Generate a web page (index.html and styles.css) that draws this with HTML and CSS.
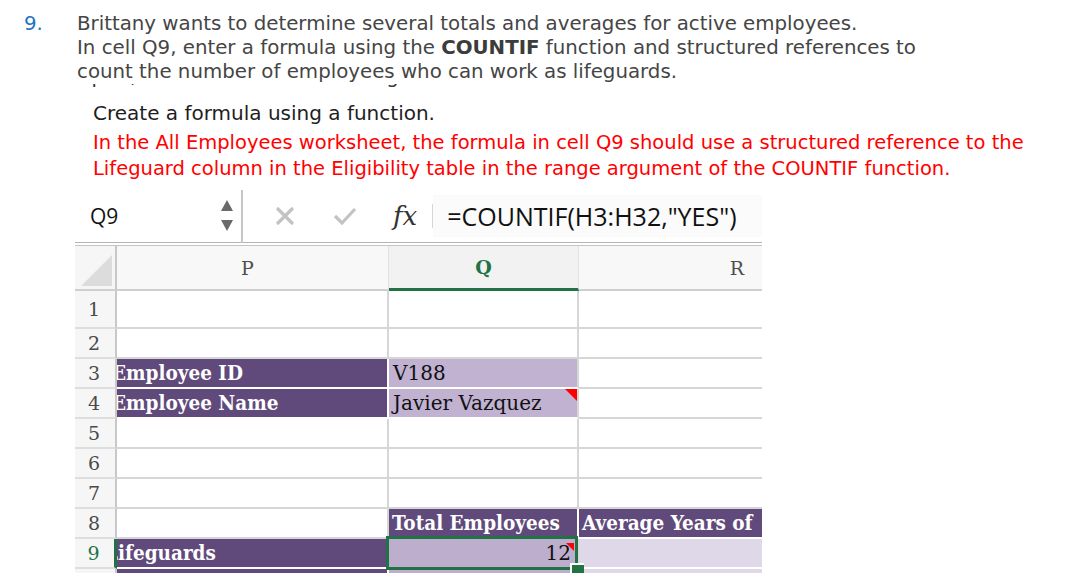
FILE: index.html
```html
<!DOCTYPE html>
<html>
<head>
<meta charset="utf-8">
<link rel="stylesheet" href="styles.css">
</head>
<body>
<div class="task">
  <div class="num">9.</div>
  <div class="task-text">
    <p class="lines">Brittany wants to determine several totals and averages for active employees.<br>In cell Q9, enter a formula using the <b>COUNTIF</b> function and structured references to<br>count the number of employees who can work as lifeguards.</p>
    <div class="cut"><p><span class="cut-a">Up to,</span><span class="cut-b">using</span></p></div>
  </div>
</div>
<div class="req">
  <p class="create">Create a formula using a function.</p>
  <p class="red">In the All Employees worksheet, the formula in cell Q9 should use a structured reference to the<br>Lifeguard column in the Eligibility table in the range argument of the COUNTIF function.</p>
</div>
<div class="sheet">
  <div class="fbar">
    <div class="namebox">Q9</div>
    <div class="spin">
      <svg width="12" height="32" viewBox="0 0 12 32"><polygon points="6,0 12,11 0,11" fill="#6a6a6a"/><polygon points="0,20 12,20 6,31" fill="#6a6a6a"/></svg>
    </div>
    <div class="sep"></div>
    <svg class="ic-x" width="22" height="22" viewBox="0 0 22 22"><path d="M3 3 L19 19 M19 3 L3 19" stroke="#c3c3c3" stroke-width="3.2" fill="none"/></svg>
    <svg class="ic-ok" width="24" height="22" viewBox="0 0 24 22"><path d="M2 11 L9 18 L22 4" stroke="#c3c3c3" stroke-width="3.2" fill="none"/></svg>
    <div class="fx">fx</div>
    <div class="sep2"></div>
    <div class="formula">=COUNTIF(H3:H32,"YES")</div>
  </div>
  <div class="grid">
    <div class="c rh corner"><svg width="31" height="31" viewBox="0 0 31 31"><polygon points="31,0 31,31 0,31" fill="#dcdcdc"/></svg></div>
    <div class="c ch colp">P</div>
    <div class="c ch sel">Q</div>
    <div class="c ch last">R</div>

    <div class="c rh">1</div><div class="c"></div><div class="c"></div><div class="c last"></div>
    <div class="c rh">2</div><div class="c"></div><div class="c"></div><div class="c last"></div>
    <div class="c rh">3</div><div class="c dk cut5">Employee ID</div><div class="c lt">V188</div><div class="c last"></div>
    <div class="c rh">4</div><div class="c dk cut5">Employee Name</div><div class="c lt">Javier Vazquez<span class="note big"></span></div><div class="c last"></div>
    <div class="c rh">5</div><div class="c"></div><div class="c"></div><div class="c last"></div>
    <div class="c rh">6</div><div class="c"></div><div class="c"></div><div class="c last"></div>
    <div class="c rh">7</div><div class="c"></div><div class="c"></div><div class="c last"></div>
    <div class="c rh">8</div><div class="c"></div><div class="c dk hd">Total Employees</div><div class="c dk hd last">Average Years of</div>
    <div class="c rh rsel">9</div><div class="c dk cut11">Lifeguards</div><div class="c lt2 num-cell active">12<span class="note small"></span></div><div class="c lav last"></div>
    <div class="c rh">10</div><div class="c dk"></div><div class="c lt2"></div><div class="c lav last"></div>
  </div>
</div>
</body>
</html>
```
FILE: styles.css
```css
* { box-sizing: border-box; }
html, body { margin: 0; padding: 0; background: #fff; }
body { width: 1084px; height: 580px; overflow: hidden; }
p { margin: 0; }

.task {
  display: flex;
  padding-top: 12px;
  font-family: "DejaVu Sans", Verdana, sans-serif;
  font-size: 19.8px;
  line-height: 24px;
  color: #454545;
}
.num { width: 77px; padding-left: 24px; color: #1b74c5; }
.lines b { font-weight: bold; color: #3c3c3c; }
.cut { height: 5px; overflow: hidden; }
.cut p { margin-top: -19px; color: #333; white-space: nowrap; }
.cut-b { margin-left: 209px; }

.req { margin: 11px 0 0 93px; font-family: "DejaVu Sans", sans-serif; }
.create { font-size: 20px; line-height: 26px; color: #1e1e1e; }
.red { margin-top: 4px; font-size: 19.5px; line-height: 26px; color: #ff0000; }

.sheet { margin: 8px 0 0 75px; width: 687px; }

.fbar {
  height: 53px;
  display: flex;
  align-items: center;
  border-bottom: 1px solid #b4b4b4;
  margin-bottom: 2px;
}
.namebox {
  width: 146px;
  padding-left: 15px;
  font-family: "Open Sans", sans-serif;
  font-size: 21px;
  color: #111;
}
.spin { width: 20px; display: flex; align-items: center; }
.sep { width: 2px; height: 53px; background: #c6c6c6; }
.ic-x { margin-left: 31px; }
.ic-ok { margin-left: 37px; }
.fx {
  margin-left: 36px;
  font-family: "DejaVu Serif", serif;
  font-style: italic;
  font-size: 26px;
  color: #333;
  line-height: 30px;
}
.sep2 { margin-left: 15px; width: 1px; height: 24px; background: #d6d6d6; }
.formula {
  flex: 1;
  height: 42px;
  padding-left: 14px;
  display: flex;
  align-items: center;
  background: #fbfbfb;
  font-family: "Open Sans", sans-serif;
  font-size: 25px;
  color: #111;
  white-space: nowrap;
}

.grid {
  display: grid;
  grid-template-columns: 42px 272px 190px 316px;
  grid-template-rows: 45px 38px repeat(9, 30px);
  width: 687px;
  height: 328px;
  overflow: hidden;
  border-top: 1px solid #c4c4c4;
  font-family: "DejaVu Serif", serif;
}
.c {
  position: relative;
  border-right: 2px solid #d6d6d6;
  border-bottom: 2px solid #d6d6d6;
  display: flex;
  align-items: center;
  padding-left: 4px;
  font-size: 20px;
  color: #111;
  white-space: nowrap;
}
.c.last { border-right: none; }
.rh {
  background: #f6f6f6;
  border-right: 2px solid #c8c8c8;
  border-bottom: 2px solid #dedede;
  justify-content: center;
  padding-left: 0;
  padding-right: 2px;
  color: #4a4a4a;
  font-size: 19px;
}
.corner { align-items: flex-end; justify-content: flex-end; padding: 0 3px 3px 0; border-bottom: 2px solid #cfcfcf; }
.ch {
  background: #f8f8f8;
  justify-content: center;
  padding-left: 0;
  color: #4f4f4f;
  font-size: 19px;
  border-right: 1px solid #e2e2e2;
  border-bottom: 2px solid #cfcfcf;
}
.colp { padding-right: 10px; }
.ch.sel {
  background: #f2f2f2;
  color: #217346;
  font-weight: bold;
  border-bottom: 3px solid #217346;
}
.dk {
  background: #604a7b;
  color: #fff;
  font-weight: bold;
  font-stretch: condensed;
  font-size: 20.5px;
  border-color: #fff;
  overflow: hidden;
}
.hd { padding-left: 3px; }
.cut5 { padding-left: 0; text-indent: -5px; }
.cut11 { padding-left: 0; text-indent: -12px; }
.lt { background: #c1b2d1; border-bottom-color: #fff; }
.lt2 { background: #bdaecd; }
.lav { background: #dfd8e8; border-bottom-color: #fff; }
.num-cell { justify-content: flex-end; padding-right: 6px; }
.rsel { color: #217346; border-right: 3px solid #217346; }

.note {
  position: absolute;
  top: 0;
  right: 0;
  width: 0;
  height: 0;
  border-style: solid;
  border-color: transparent;
  border-top-color: #ff0000;
  border-right-color: #ff0000;
}
.note.big { border-width: 6px; }
.note.small { border-width: 4px; top: 4px; right: 3px; }

.active::after {
  content: "";
  position: absolute;
  top: -3px;
  left: -3px;
  right: -1px;
  bottom: -3px;
  border: 3px solid #217346;
  z-index: 2;
}
.active::before {
  content: "";
  position: absolute;
  left: 181px;
  top: 24px;
  width: 12px;
  height: 12px;
  background: #217346;
  border-left: 2px solid #fff;
  border-top: 2px solid #fff;
  z-index: 3;
}
```
